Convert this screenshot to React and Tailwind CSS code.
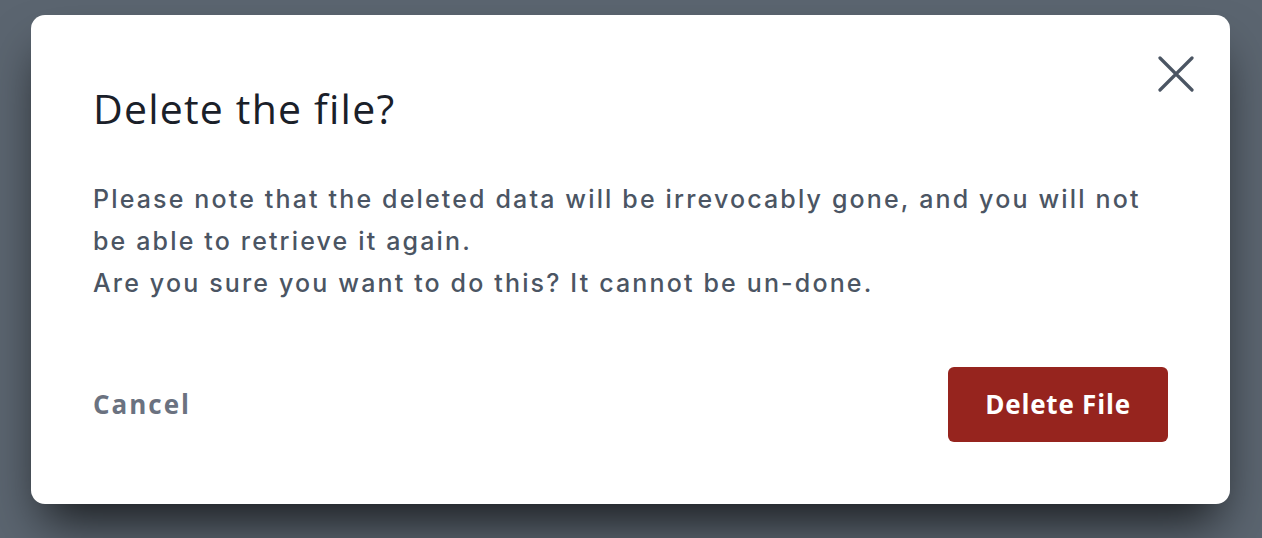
import React from "react";

const CloseIcon = () => (
  <svg width="36" height="36" viewBox="0 0 36 36" fill="none">
    <path
      d="M2 2L34 34M34 2L2 34"
      stroke="#4b5563"
      strokeWidth="3.2"
      strokeLinecap="round"
    />
  </svg>
);

const App = () => {
  return (
    <div
      className="min-h-[538px] bg-[#5b6570] pt-[15px] pl-[31px] pr-[32px]"
      style={{ fontFamily: '"Open Sans", "Noto Sans", sans-serif' }}
    >
      <div className="relative h-[489px] rounded-[14px] bg-white px-[62px] pt-[65px] shadow-[0_28px_50px_-12px_rgba(0,0,0,0.75)]">
        {/* close button */}
        <button className="absolute right-[35px] top-[40px] p-[1px]">
          <CloseIcon />
        </button>

        <h2 className="text-[41px] leading-[56px] font-normal tracking-[1.2px] text-[#1a2029]">
          Delete the file?
        </h2>

        <p
          className="mt-[42px] whitespace-nowrap text-[25px] leading-[42px] font-medium tracking-[2.15px] text-[#4b5563]"
          style={{ fontFamily: 'Inter, "Open Sans", sans-serif' }}
        >
          Please note that the deleted data will be irrevocably gone, and you
          will not
          <br />
          be able to retrieve it again.
          <br />
          Are you sure you want to do this? It cannot be un-done.
        </p>

        <div className="mt-[63px] flex items-center justify-between">
          <button className="text-[26px] font-bold tracking-[2px] text-[#6b7280]">
            Cancel
          </button>
          <button className="h-[75px] w-[220px] rounded-[6px] bg-[#96241e] text-[26px] font-bold tracking-[0.8px] text-white">
            Delete File
          </button>
        </div>
      </div>
    </div>
  );
};

export default App;
